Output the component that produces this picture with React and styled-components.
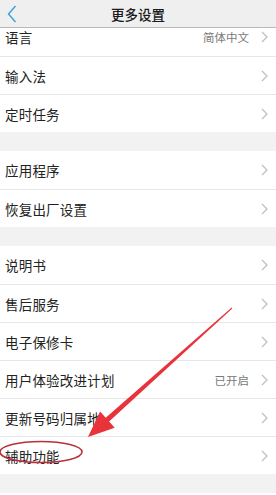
import React from 'react';
import styled, { createGlobalStyle } from 'styled-components';

const GlobalStyle = createGlobalStyle`
	html, body {
		margin: 0;
		padding: 0;
		background: #f2f2f2;
	}
	body {
		font-family: 'Noto Sans CJK SC', 'Noto Sans', sans-serif;
	}
`;

const Page = styled.div`
	position: relative;
	width: 276px;
	height: 495px;
	overflow: hidden;
	background: #f2f2f2;
`;

const Header = styled.div`
	position: relative;
	z-index: 2;
	height: 28px;
	display: flex;
	align-items: center;
	justify-content: center;
	background: #efefef;
	border-bottom: 1px solid #b9b9b9;
	box-sizing: border-box;
`;

const BackButton = styled.div`
	position: absolute;
	left: 7px;
	top: 5px;
	width: 10px;
	height: 18px;
	display: flex;
`;

const Title = styled.span`
	font-size: 13.5px;
	color: #1a1a1a;
	font-weight: 500;
`;

const Scroller = styled.div`
	margin-top: -10px;
	display: flex;
	flex-direction: column;
	gap: 19px;
`;

const Group = styled.div`
	background: #fff;
`;

const Row = styled.div`
	height: 38px;
	display: flex;
	align-items: center;
	padding: 0 8px 0 5px;
	box-sizing: border-box;
	border-top: ${(p) => (p.first ? 'none' : '1px solid #e6e6e6')};
`;

const Label = styled.span`
	flex: 1;
	font-size: 13.5px;
	color: #222;
	letter-spacing: 0.2px;
`;

const Value = styled.span`
	font-size: 11.5px;
	color: #7a7a7a;
	margin-right: 12px;
`;

const Overlay = styled.svg`
	position: absolute;
	left: 0;
	top: 0;
	pointer-events: none;
	z-index: 3;
`;

const Chevron = () => (
	<svg width="7" height="12" viewBox="0 0 7 12">
		<path d="M1 1 L6 6 L1 11" fill="none" stroke="#bdbdbd" strokeWidth="1.2" />
	</svg>
);

const groups = [
	[
		{ label: '语言', value: '简体中文' },
		{ label: '输入法' },
		{ label: '定时任务' },
	],
	[{ label: '应用程序' }, { label: '恢复出厂设置' }],
	[
		{ label: '说明书' },
		{ label: '售后服务' },
		{ label: '电子保修卡' },
		{ label: '用户体验改进计划', value: '已开启' },
		{ label: '更新号码归属地' },
		{ label: '辅助功能' },
	],
];

const App = () => {
	return (
		<Page>
			<GlobalStyle />
			<Header>
				<BackButton>
					<svg width="10" height="18" viewBox="0 0 10 18">
						<path d="M8.5 1 L1.5 9 L8.5 17" fill="none" stroke="#3b9fd6" strokeWidth="1.4" />
					</svg>
				</BackButton>
				<Title>更多设置</Title>
			</Header>
			<Scroller>
				{groups.map((rows, gi) => (
					<Group key={gi}>
						{rows.map((r, i) => (
							<Row key={r.label} first={i === 0}>
								<Label>{r.label}</Label>
								{r.value && <Value>{r.value}</Value>}
								<Chevron />
							</Row>
						))}
					</Group>
				))}
				<Group>
					<Row first />
				</Group>
			</Scroller>
			<Overlay width="276" height="495" viewBox="0 0 276 495">
				<polygon
					points="231.7,307.6 105.7,417.7 100.1,411.4 88,437 114.7,427.8 109.1,421.5 232.3,308.4"
					fill="#e8333a"
				/>
				<ellipse cx="41" cy="452" rx="41" ry="10.5" fill="none" stroke="#b8303a" strokeWidth="1.6" />
			</Overlay>
		</Page>
	);
};

export default App;
